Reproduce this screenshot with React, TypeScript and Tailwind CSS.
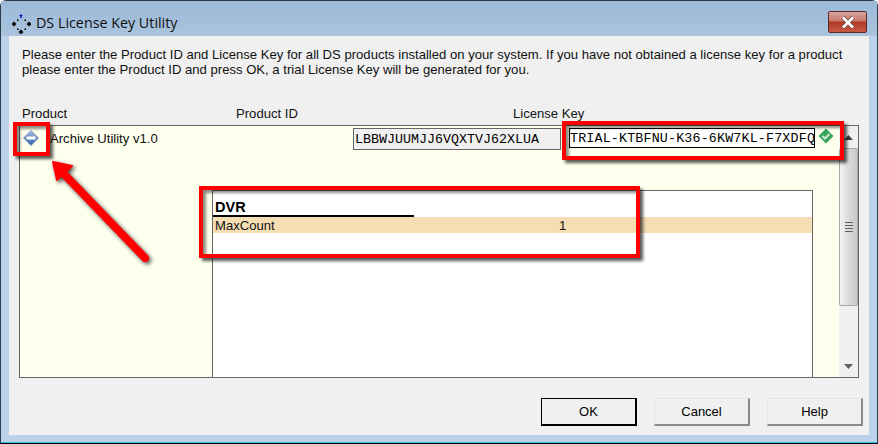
import React from "react";

function MoveIcon() {
  return (
    <svg width="20" height="20" viewBox="0 0 20 20" className="shrink-0">
      <g fill="#000">
        <path d="M10 15.5l2.5 2.5-2.5 2.5-2.5-2.5z" />
        <path d="M3 10.5l2.5 2.5-2.5 2.5-2.5-2.5z" transform="translate(0 -3)" />
        <path d="M17 10.5l2.5 2.5-2.5 2.5-2.5-2.5z" transform="translate(1 -3)" />
        <rect x="6" y="5.5" width="1.5" height="1.5" />
        <rect x="13.5" y="5.5" width="1.5" height="1.5" />
        <rect x="6" y="14.5" width="1.5" height="1.5" />
        <rect x="13.5" y="14.5" width="1.5" height="1.5" />
      </g>
      <path d="M10 0l1.8 2H10.7v2H9.3V2H8.2z" fill="#0000c0" />
    </svg>
  );
}

function CloseButton() {
  return (
    <div className="w-[39px] h-[22px] rounded-[2px] border border-[#5a2a30] flex items-center justify-center bg-[linear-gradient(#d8a59c_0%,#c9796c_45%,#b03a24_50%,#c65a45_100%)]">
      <svg width="14" height="13" viewBox="0 0 14 13">
        <path d="M2 1.5l10 10M12 1.5l-10 10" stroke="#5a3030" strokeWidth="4.2" />
        <path d="M2 1.5l10 10M12 1.5l-10 10" stroke="#ffffff" strokeWidth="3" />
      </svg>
    </div>
  );
}

function ExpandIcon() {
  return (
    <svg width="16" height="16" viewBox="0 0 16 16" className="shrink-0">
      <defs>
        <linearGradient id="dia" x1="0" y1="0" x2="0" y2="1">
          <stop offset="0" stopColor="#a9bde0" />
          <stop offset="1" stopColor="#2f63ab" />
        </linearGradient>
      </defs>
      <path d="M8 0.5L15.5 8 8 15.5 0.5 8z" fill="url(#dia)" stroke="#5f7fb0" strokeWidth="0.6" />
      <rect x="3.5" y="6.5" width="9" height="3" fill="#ffffff" />
    </svg>
  );
}

function OkIcon() {
  return (
    <svg width="16" height="16" viewBox="0 0 16 16" className="shrink-0">
      <path d="M8 0.5L15.5 8 8 15.5 0.5 8z" fill="#3aa45c" />
      <path d="M4.5 8l2.5 2.5 4.5-4.5" fill="none" stroke="#cfe9d6" strokeWidth="2" />
    </svg>
  );
}

function Scrollbar() {
  return (
    <div className="w-[19px] h-full flex flex-col bg-[#f0f0f0]">
      <div className="h-[22px] flex items-center justify-center">
        <svg width="9" height="5" viewBox="0 0 9 5"><path d="M4.5 0L9 5H0z" fill="#404040" /></svg>
      </div>
      <div className="h-[158px] rounded-[2px] border border-[#a8a8a8] flex items-center justify-center bg-[linear-gradient(90deg,#f2f2f2,#dcdcdc_50%,#c8c8c8)]">
        <div className="w-[8px] flex flex-col gap-[2px]">
          <div className="h-px bg-[#606060]" />
          <div className="h-px bg-[#606060]" />
          <div className="h-px bg-[#606060]" />
          <div className="h-px bg-[#606060]" />
        </div>
      </div>
      <div className="flex-1" />
      <div className="h-[21px] flex items-center justify-center">
        <svg width="9" height="5" viewBox="0 0 9 5"><path d="M0 0H9L4.5 5z" fill="#606060" /></svg>
      </div>
    </div>
  );
}

function Btn({ label, primary }: { label: string; primary?: boolean }) {
  return (
    <div
      className={
        "w-[96px] h-[28px] flex items-center justify-center bg-[#f0f0f0] text-black text-[13px] border-t border-l border-r-2 border-b-2 " +
        (primary
          ? "border-black"
          : "border-t-[#e4e4e4] border-l-[#e4e4e4] border-r-[#8a8a8a] border-b-[#8a8a8a]")
      }
    >
      {label}
    </div>
  );
}

function RedBox({ className }: { className: string }) {
  return (
    <div
      className={
        "absolute border-[4px] border-[#ff0000] shadow-[3px_3px_3px_rgba(0,0,0,0.65),inset_3px_3px_3px_rgba(0,0,0,0.45)] " +
        className
      }
    />
  );
}

export default function App() {
  return (
    <div className="relative w-[878px] h-[444px] overflow-hidden bg-white font-['Liberation_Sans',Arial,sans-serif] text-[12px] text-black">
      <div className="w-[878px] h-[444px] flex flex-col rounded-t-[6px] border border-[#2c3a48] border-b-black bg-[#bcd2ea] shadow-[inset_0_-1px_0_#2fc0e0]">
        <div className="h-[35px] shrink-0 pl-[10px] pr-[10px] pt-[1px] flex items-start justify-between bg-[linear-gradient(#9cb9d8,#aac4de)]">
          <div className="flex items-center gap-[5px] pt-[10px]">
            <MoveIcon />
            <span className="pb-[2px] font-['Open_Sans',sans-serif] text-[14.3px] text-[#101010]">DS License Key Utility</span>
          </div>
          <div className="pt-[9px]"><CloseButton /></div>
        </div>
        <div className="mx-[8px] mb-[7px] h-[399px] shrink-0 bg-[#f0f0f0] flex flex-col">
          <div className="pl-[13px] pt-[11px] h-[70px] shrink-0 text-[13.1px] leading-[15px] text-[#101010] whitespace-nowrap">
            <div>Please enter the Product ID and License Key for all DS products installed on your system. If you have not obtained a license key for a product</div>
            <div>please enter the Product ID and press OK, a trial License Key will be generated for you.</div>
          </div>
          <div className="h-[19px] shrink-0 flex text-[13.1px] leading-[16px] text-[#101010]">
            <div className="w-[227px] pl-[13px]">Product</div>
            <div className="w-[277px]">Product ID</div>
            <div>License Key</div>
          </div>
          <div className="mx-[10px] h-[253px] shrink-0 border-[1px] border-[#666666] bg-[#ffffee] flex">
            <div className="flex-1 min-w-0 flex flex-col">
              <div className="h-[64px] shrink-0 flex items-start">
                <div className="w-[30px] pl-[3px] pt-[4px]"><ExpandIcon /></div>
                <div className="w-[303px] pt-[5px] text-[13.1px] leading-[16px] text-[#101010]">Archive Utility v1.0</div>
                <div className="mt-[2px] w-[208px] h-[22px] bg-[#f0f0f0] border border-[#666666] font-['Liberation_Mono',monospace] text-[13.33px] leading-[22px] pl-[1px] overflow-hidden whitespace-nowrap">LBBWJUUMJJ6VQXTVJ62XLUA</div>
                <div className="mt-[2px] ml-[8px] w-[246px] h-[20px] bg-white border border-black font-['Liberation_Mono',monospace] text-[13.33px] tracking-[0.17px] leading-[20px] overflow-hidden whitespace-nowrap">TRIAL-KTBFNU-K36-6KW7KL-F7XDFQ</div>
                <div className="ml-[3px] mt-[2px]"><OkIcon /></div>
              </div>
              <div className="flex-1 min-h-0 pl-[192px] pr-[26px]">
                <div className="h-full bg-white border-l border-t border-r border-[#666666]">
                  <div className="h-[26px] w-[201px] border-b-2 border-black pl-[2px] pt-[8px] font-bold text-[14.5px] leading-[17px]">DVR</div>
                  <div className="h-[16px] bg-[#f5deb3] flex text-[13.1px] leading-[18px] text-[#101010] overflow-hidden">
                    <div className="w-[346px] pl-[2px]">MaxCount</div>
                    <div>1</div>
                  </div>
                </div>
              </div>
            </div>
            <Scrollbar />
          </div>
          <div className="flex-1 flex justify-end items-start gap-[17px] pt-[20px] pr-[6px]">
            <Btn label="OK" primary />
            <Btn label="Cancel" />
            <Btn label="Help" />
          </div>
        </div>
      </div>

      <RedBox className="left-[13px] top-[122px] w-[37px] h-[34px]" />
      <RedBox className="left-[562px] top-[121px] w-[282px] h-[39px]" />
      <RedBox className="left-[199px] top-[186px] w-[441px] h-[72px]" />
      <svg className="absolute left-[45px] top-[155px] drop-shadow-[2px_2px_2px_rgba(0,0,0,0.7)]" width="115" height="115" viewBox="0 0 115 115">
        <path d="M18 18L100 103" stroke="#ff0000" strokeWidth="8" strokeLinecap="round" />
        <path d="M8 7L27 11 12 25z" fill="#ff0000" stroke="#ff0000" strokeWidth="2" strokeLinejoin="round" />
      </svg>
    </div>
  );
}
